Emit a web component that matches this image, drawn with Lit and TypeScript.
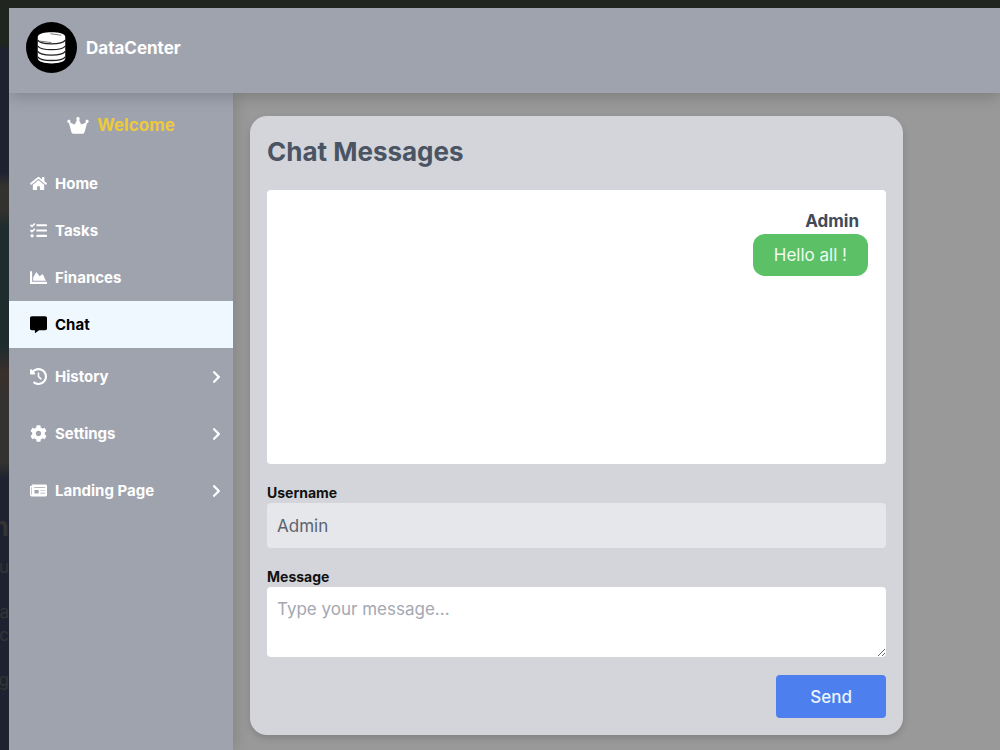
import { LitElement, html, css, svg } from "lit";
import { customElement, property, state } from "lit/decorators.js";
import { classMap } from "lit/directives/class-map.js";

interface Glyph {
  box: string;
  path: string;
}

const glyphs: Record<string, Glyph> = {
  crown: {
    box: "0 0 576 512",
    path: "M318 106c11-8 16-20 16-34c0-24-20-42-46-42s-46 18-46 42c0 14 5 26 16 34L212 206c-10 20-34 24-52 12L78 172c6-6 8-16 8-26c0-24-18-42-43-42S0 122 0 146s18 42 43 42L110 432c8 30 30 48 60 48H406c30 0 52-18 60-48L533 188c25 0 43-18 43-42s-18-42-43-42s-43 18-43 42c0 10 2 20 8 26l-82 46c-18 12-42 8-52-12L318 106z",
  },
  home: {
    box: "0 0 576 512",
    path: "M280.37 148.26L96 300.11V464a16 16 0 0 0 16 16l112.06-.29a16 16 0 0 0 15.92-16V368a16 16 0 0 1 16-16h64a16 16 0 0 1 16 16v95.64a16 16 0 0 0 16 16.05L464 480a16 16 0 0 0 16-16V300L295.67 148.26a12.19 12.19 0 0 0-15.3 0zM571.6 251.47L488 182.56V44.05a12 12 0 0 0-12-12h-56a12 12 0 0 0-12 12v72.61L318.47 43a48 48 0 0 0-61 0L4.34 251.47a12 12 0 0 0-1.6 16.9l25.5 31A12 12 0 0 0 45.15 301l235.22-193.74a12.19 12.19 0 0 1 15.3 0L530.9 301a12 12 0 0 0 16.9-1.6l25.5-31a12 12 0 0 0-1.7-16.93z",
  },
  tasks: {
    box: "0 0 512 512",
    path: "M139.61 35.5a12 12 0 0 0-17 0L58.93 98.81l-22.7-22.12a12 12 0 0 0-17 0L3.53 92.41a12 12 0 0 0 0 17l47.59 47.4a12.78 12.78 0 0 0 17.61 0l15.59-15.62L156.52 69a12.09 12.09 0 0 0 .09-17zm0 159.19a12 12 0 0 0-17 0l-63.68 63.72-22.7-22.1a12 12 0 0 0-17 0L3.53 252a12 12 0 0 0 0 17L51 316.5a12.77 12.77 0 0 0 17.6 0l15.7-15.69 72.2-72.22a12 12 0 0 0 .09-16.9zM64 368c-26.49 0-48.59 21.5-48.59 48S37.53 464 64 464a48 48 0 0 0 0-96zm432 16H208a16 16 0 0 0-16 16v32a16 16 0 0 0 16 16h288a16 16 0 0 0 16-16v-32a16 16 0 0 0-16-16zm0-320H208a16 16 0 0 0-16 16v32a16 16 0 0 0 16 16h288a16 16 0 0 0 16-16V80a16 16 0 0 0-16-16zm0 160H208a16 16 0 0 0-16 16v32a16 16 0 0 0 16 16h288a16 16 0 0 0 16-16v-32a16 16 0 0 0-16-16z",
  },
  chart: {
    box: "0 0 512 512",
    path: "M500 384c6.6 0 12 5.4 12 12v40c0 6.6-5.4 12-12 12H12c-6.6 0-12-5.4-12-12V76c0-6.6 5.4-12 12-12h40c6.6 0 12 5.4 12 12v308h436zM372.7 159.5L288 216l-85.3-113.7c-5.1-6.8-15.5-6.3-19.9 1L96 248v104h384l-89.9-187.8c-3.2-6.5-11.4-8.7-17.4-4.7z",
  },
  chat: {
    box: "0 0 512 512",
    path: "M56 10C24 10 0 34 0 62V378c0 28 24 52 56 52h92v66c0 14 14 20 24 12L272 430H456c32 0 56-24 56-52V62c0-28-24-52-56-52H56z",
  },
  history: {
    box: "0 0 512 512",
    path: "M75 75L41 41C25.900 25.900 0 36.600 0 57.900V168c0 13.300 10.700 24 24 24H134.100c21.400 0 32.100-25.900 17-41l-30.800-30.800C155 85.500 203 64 256 64c106 0 192 86 192 192s-86 192-192 192c-40.800 0-78.600-12.700-109.700-34.400c-14.500-10.100-34.400-6.600-44.600 7.900s-6.600 34.400 7.900 44.600C151.200 495 201.700 512 256 512c141.400 0 256-114.600 256-256S397.400 0 256 0C185.300 0 121.300 28.700 75 75zm181 53c-13.300 0-24 10.700-24 24V256c0 6.400 2.500 12.500 7 17l72 72c9.400 9.400 24.600 9.400 33.900 0s9.400-24.600 0-33.900l-65-65V152c0-13.300-10.700-24-24-24z",
  },
  cog: {
    box: "0 0 512 512",
    path: "M487.4 315.7l-42.6-24.6c4.3-23.2 4.3-47 0-70.2l42.6-24.6c4.9-2.8 7.1-8.6 5.5-14-11.1-35.6-30-67.8-54.7-94.6-3.8-4.1-10-5.1-14.8-2.3L380.8 110c-17.900-15.400-38.500-27.300-60.800-35.100V25.800c0-5.600-3.900-10.500-9.400-11.700-36.700-8.200-74.300-7.800-109.200 0-5.500 1.200-9.400 6.100-9.400 11.700V75c-22.200 7.900-42.800 19.800-60.800 35.100L88.700 85.500c-4.900-2.800-11-1.900-14.800 2.300-24.700 26.700-43.600 58.900-54.700 94.600-1.700 5.400.6 11.200 5.500 14L67.300 221c-4.300 23.200-4.300 47 0 70.200l-42.600 24.600c-4.900 2.800-7.100 8.600-5.500 14 11.100 35.600 30 67.800 54.700 94.600 3.800 4.100 10 5.100 14.800 2.300l42.600-24.600c17.900 15.400 38.500 27.300 60.800 35.100v49.200c0 5.600 3.900 10.500 9.400 11.700 36.700 8.200 74.300 7.800 109.200 0 5.500-1.200 9.400-6.100 9.400-11.700v-49.200c22.200-7.900 42.800-19.800 60.800-35.100l42.600 24.600c4.900 2.800 11 1.900 14.800-2.300 24.700-26.700 43.600-58.900 54.700-94.600 1.500-5.500-.7-11.300-5.600-14.100zM256 336c-44.100 0-80-35.900-80-80s35.900-80 80-80 80 35.900 80 80-35.900 80-80 80z",
  },
  news: {
    box: "0 0 576 512",
    path: "M112 56H528a48 48 0 0 1 48 48V408a48 48 0 0 1-48 48H56a56 56 0 0 1-56-56V128a24 24 0 0 1 24-24H56V80a24 24 0 0 1 24-24zM48 150V392a10 10 0 0 0 20 0V150zM144 136V166H512V136zM152 236V356H292V236zM352 236V260H512V236zM352 330V354H512V330z",
  },
  chevron: {
    box: "0 0 320 512",
    path: "M285.500 273L91.100 467.300c-9.400 9.400-24.600 9.400-33.900 0l-22.700-22.700c-9.400-9.400-9.400-24.500 0-33.900L188.500 256 34.500 101.300c-9.300-9.400-9.300-24.500 0-33.900l22.700-22.700c9.400-9.400 24.600-9.400 33.900 0L285.500 239c9.400 9.400 9.400 24.600 0 34z",
  },
};

@customElement("ui-icon")
export class UiIcon extends LitElement {
  @property() name = "home";

  static styles = css`
    :host {
      display: inline-flex;
      flex: none;
    }
    .glyph {
      width: 100%;
      height: 100%;
      fill: currentColor;
      fill-rule: evenodd;
    }
  `;

  render() {
    const g = glyphs[this.name];
    return html`<svg class="glyph" viewBox=${g.box} aria-hidden="true">
      ${svg`<path d=${g.path}></path>`}
    </svg>`;
  }
}

@customElement("app-header")
export class AppHeader extends LitElement {
  static styles = css`
    :host {
      display: block;
      background: #9fa3ae;
      box-shadow: 0 4px 14px rgba(0, 0, 0, 0.18);
      z-index: 1;
      clip-path: inset(0 0 -24px 0);
    }
    .bar {
      display: flex;
      align-items: center;
      padding: 14px 17px 20px;
    }
    .brand {
      display: flex;
      align-items: center;
      gap: 9px;
      color: #fff;
      font-size: 17px;
      line-height: 24px;
      font-weight: 700;
      text-decoration: none;
    }
    .logo {
      width: 51px;
      height: 51px;
    }
  `;

  render() {
    return html`<div class="bar">
      <a class="brand" href="#">
        <svg class="logo" viewBox="0 0 52 52" aria-hidden="true">
          <circle cx="26" cy="26" r="26" fill="#000"></circle>
          <path
            d="M12 15c0-6 28-6 28 0v22c0 7-28 7-28 0z"
            fill="#fff"
          ></path>
          <g fill="none" stroke="#222" stroke-width="1.300">
            <path d="M12 18.500c3 5 25 5 28 0"></path>
            <path d="M12 24.500c3 5 25 5 28 0"></path>
            <path d="M12 30c3 5 25 5 28 0"></path>
            <path d="M12 35.500c3 5 25 5 28 0"></path>
            <path d="M14 19.500l12 1.500M25 12l11 1.500" stroke="#777" stroke-width="1"></path>
          </g>
        </svg>
        <span>DataCenter</span>
      </a>
    </div>`;
  }
}

interface Entry {
  icon: string;
  label: string;
  nested?: boolean;
}

const entries: Entry[] = [
  { icon: "home", label: "Home" },
  { icon: "tasks", label: "Tasks" },
  { icon: "chart", label: "Finances" },
  { icon: "chat", label: "Chat" },
  { icon: "history", label: "History", nested: true },
  { icon: "cog", label: "Settings", nested: true },
  { icon: "news", label: "Landing Page", nested: true },
];

@customElement("app-sidebar")
export class AppSidebar extends LitElement {
  @state() private current = "Chat";

  static styles = css`
    :host {
      display: block;
      flex: 0 0 224px;
      background: #9fa3ae;
      box-shadow: 2px 0 14px rgba(0, 0, 0, 0.14);
      clip-path: inset(0 -24px 0 0);
    }
    .welcome {
      display: flex;
      align-items: center;
      justify-content: center;
      gap: 8px;
      margin: 0;
      padding: 20px 0 23px;
      font-size: 17px;
      line-height: 24px;
      font-weight: 700;
      color: #edc93c;
    }
    .crown {
      width: 22px;
      height: 19px;
      color: #fff;
    }
    .list {
      list-style: none;
      margin: 0;
      padding: 0;
    }
    .entry {
      box-sizing: border-box;
      display: flex;
      align-items: center;
      gap: 8px;
      width: 100%;
      min-height: 47px;
      padding: 0 12px 0 21px;
      border: 0;
      background: none;
      color: #fff;
      font: inherit;
      font-size: 15px;
      line-height: 20px;
      font-weight: 700;
      text-align: left;
      text-decoration: none;
      cursor: pointer;
    }
    .nested {
      min-height: 57px;
    }
    .active {
      background: #f0f8ff;
      color: #000;
    }
    .icon {
      width: 17px;
      height: 17px;
    }
    .label {
      flex: 1;
    }
    .chevron {
      width: 9px;
      height: 14px;
    }
  `;

  private entry(e: Entry) {
    if (e.nested) {
      return html`<button class="entry nested" type="button" aria-expanded="false">
        <ui-icon class="icon" name=${e.icon}></ui-icon>
        <span class="label">${e.label}</span>
        <ui-icon class="chevron" name="chevron"></ui-icon>
      </button>`;
    }
    return html`<a
      class=${classMap({ entry: true, active: e.label === this.current })}
      href="#"
      @click=${() => (this.current = e.label)}
    >
      <ui-icon class="icon" name=${e.icon}></ui-icon>
      <span class="label">${e.label}</span>
    </a>`;
  }

  render() {
    return html`<nav>
      <p class="welcome">
        <ui-icon class="crown" name="crown"></ui-icon><span>Welcome</span>
      </p>
      <ul class="list">
        ${entries.map((e) => html`<li>${this.entry(e)}</li>`)}
      </ul>
    </nav>`;
  }
}

@customElement("chat-panel")
export class ChatPanel extends LitElement {
  @state() private messages = [{ author: "Admin", text: "Hello all !" }];

  static styles = css`
    :host {
      display: block;
    }
    .card {
      padding: 17px;
      border-radius: 17px;
      background: #d3d5db;
      box-shadow: 0 3px 7px rgba(0, 0, 0, 0.15);
    }
    .title {
      margin: 0 0 19px;
      font-size: 26px;
      line-height: 38px;
      font-weight: 700;
      color: #4b5463;
    }
    .log {
      box-sizing: border-box;
      height: 274px;
      margin-bottom: 19px;
      padding: 18px;
      border-radius: 4px;
      background: #fff;
      overflow-y: auto;
    }
    .message {
      display: flex;
      flex-direction: column;
      align-items: flex-end;
    }
    .author {
      padding: 0 9px;
      font-size: 17px;
      line-height: 26px;
      font-weight: 700;
      color: #414a59;
    }
    .bubble {
      padding: 8px 21px;
      border-radius: 12px;
      background: #5cc067;
      color: #effbef;
      font-size: 17px;
      line-height: 26px;
    }
    .label {
      display: block;
      font-size: 14px;
      line-height: 20px;
      font-weight: 700;
      color: #111;
    }
    .field {
      box-sizing: border-box;
      display: block;
      width: 100%;
      margin: 0 0 19px;
      padding: 9px 10px;
      border: 0;
      border-radius: 4px;
      outline: none;
      background: #fff;
      color: #5b6370;
      font: inherit;
      font-size: 17px;
      line-height: 26px;
    }
    .name {
      height: 45px;
      background: #e5e7eb;
    }
    .text {
      height: 70px;
      margin-bottom: 18px;
      resize: vertical;
    }
    .text::placeholder {
      color: #a3a8b3;
    }
    .actions {
      display: flex;
      justify-content: flex-end;
    }
    .send {
      padding: 9px 34px 8px;
      border: 0;
      border-radius: 4px;
      background: #4d80ee;
      color: #e9f4ff;
      font: inherit;
      font-size: 17px;
      line-height: 26px;
      font-weight: 500;
      cursor: pointer;
    }
  `;

  private send(event: Event) {
    event.preventDefault();
    const form = event.target as HTMLFormElement;
    const box = form.elements.namedItem("message") as HTMLTextAreaElement;
    if (!box.value.trim()) return;
    this.messages = [...this.messages, { author: "Admin", text: box.value }];
    box.value = "";
  }

  render() {
    return html`<section class="card">
      <h1 class="title">Chat Messages</h1>
      <div class="log">
        ${this.messages.map(
          (m) => html`<div class="message">
            <span class="author">${m.author}</span>
            <span class="bubble">${m.text}</span>
          </div>`
        )}
      </div>
      <form @submit=${this.send}>
        <label class="label" for="username">Username</label>
        <input class="field name" id="username" type="text" value="Admin" readonly />
        <label class="label" for="message">Message</label>
        <textarea
          class="field text"
          id="message"
          name="message"
          placeholder="Type your message..."
        ></textarea>
        <div class="actions">
          <button class="send" type="submit">Send</button>
        </div>
      </form>
    </section>`;
  }
}

@customElement("app-root")
export class AppRoot extends LitElement {
  static styles = css`
    :host {
      box-sizing: border-box;
      display: flex;
      min-height: 100vh;
      padding-top: 8px;
      font-family: Inter, "Liberation Sans", sans-serif;
      background: linear-gradient(
        #20251f 0 44px,
        #1e2230 50px 172px,
        #33322f 186px 210px,
        #1f2c2d 226px 346px,
        #3a302c 374px,
        #333231 400px 462px,
        #1e2130 480px
      );
    }
    .behind {
      display: flex;
      flex-direction: column;
      align-items: flex-end;
      flex: 0 0 9px;
      box-sizing: border-box;
      width: 9px;
      padding-top: 500px;
      overflow: hidden;
      color: #343434;
      font-size: 17px;
      line-height: 23px;
    }
    .heading {
      font-size: 26px;
      line-height: 38px;
      font-weight: 700;
    }
    .line {
      margin-top: 10px;
    }
    .block {
      margin-top: 22px;
    }
    .window {
      display: flex;
      flex-direction: column;
      flex: 1;
      min-width: 0;
      background: #999;
    }
    .body {
      display: flex;
      flex: 1;
    }
    .main {
      flex: 1;
      min-width: 0;
      padding: 23px 17px 15px;
    }
    .panel {
      max-width: 653px;
    }
  `;

  render() {
    return html`<div class="behind" aria-hidden="true">
        <span class="heading">n</span>
        <span class="line">u</span>
        <span class="block">ea</span>
        <span>sc</span>
        <span class="block">g</span>
      </div>
      <div class="window">
        <app-header></app-header>
        <div class="body">
          <app-sidebar></app-sidebar>
          <main class="main"><chat-panel class="panel"></chat-panel></main>
        </div>
      </div>`;
  }
}
